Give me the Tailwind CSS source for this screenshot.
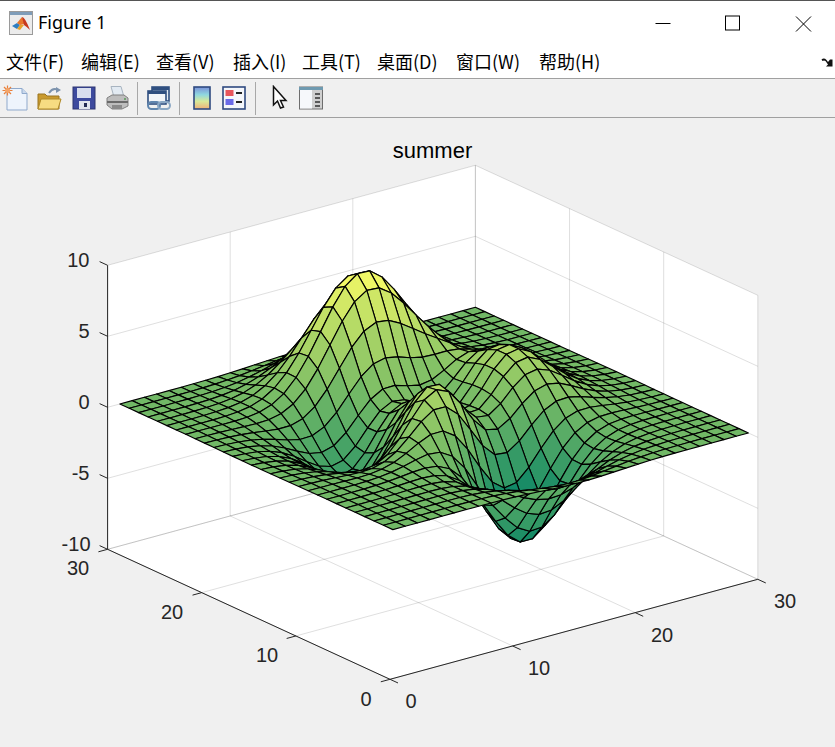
<!DOCTYPE html>
<html lang="zh">
<head>
<meta charset="utf-8">
<title>Figure 1</title>
<script src="https://cdn.jsdelivr.net/npm/@tailwindcss/browser@4"></script>
</head>
<body class="bg-[#f0f0f0] overflow-hidden">
<div class="w-[835px] h-[747px] flex flex-col bg-[#f0f0f0] font-['Noto_Sans','Noto_Sans_CJK_SC',sans-serif]">
  <!-- title bar -->
  <div class="h-[45px] bg-white border-t border-[#555] flex items-center shrink-0">
    <svg class="ml-[9px] w-[24px] h-[24px] shrink-0" viewBox="0 0 24 24">
      <rect x="0.5" y="0.5" width="23" height="23" fill="#ececec" stroke="#9a9a9a"/>
      <rect x="1" y="1" width="22" height="3" fill="#7f9db9"/>
      <path d="M3 15 L8 12 L11 14 L8 18Z" fill="#2f7fc1"/>
      <path d="M8 12 L13 6 L16 13 L11 14Z" fill="#e8762b"/>
      <path d="M13 6 Q16 6 21 19 Q18 16 15 14Z" fill="#c8391e"/>
      <path d="M8 18 L11 14 L15 14 L11 19Z" fill="#e8a22b"/>
    </svg>
    <span class="ml-[5px] mb-[2px] text-[18px] text-black leading-none">Figure 1</span>
    <div class="ml-auto flex items-center">
      <svg class="w-[16px] h-[16px] mr-[53px]" viewBox="0 0 16 16"><path d="M0.5 8.500H15.500" stroke="#000"/></svg>
      <svg class="w-[16px] h-[16px] mr-[55px]" viewBox="0 0 16 16"><rect x="1.5" y="1" width="14" height="14" fill="none" stroke="#000"/></svg>
      <svg class="w-[17px] h-[17px] mr-[23px]" viewBox="0 0 17 17"><path d="M1 1.500L16 16.500M16 1.500L1 16.500" stroke="#000" stroke-width="1"/></svg>
    </div>
  </div>
  <!-- menu bar -->
  <div class="h-[34px] pb-[2px] bg-white border-b border-[#a0a0a0] flex items-center text-[18px] text-black shrink-0 pl-[6px] relative font-['Noto_Sans_CJK_SC','Noto_Sans',sans-serif] leading-none">
    <span class="w-[75px]">文件(F)</span>
    <span class="w-[75px]">编辑(E)</span>
    <span class="w-[77px]">查看(V)</span>
    <span class="w-[69px]">插入(I)</span>
    <span class="w-[75px]">工具(T)</span>
    <span class="w-[79px]">桌面(D)</span>
    <span class="w-[83px]">窗口(W)</span>
    <span>帮助(H)</span>
    <svg class="absolute right-[2px] top-[12px] w-[12px] h-[10px]" viewBox="0 0 12 10"><path d="M0.5 2.500 Q3 0.500 5.500 3 L7 5 L9 2.500 L11.500 2.500 L11.500 9.500 L5 9.500 L7 7.500 L4.500 4 Q3 3 1.500 4Z" fill="#111"/></svg>
  </div>
  <!-- toolbar -->
  <div class="h-[39px] bg-[#f0f0f0] border-b border-[#a0a0a0] flex items-center shrink-0 pl-[2px]">
    <svg class="w-[26px] h-[26px]" viewBox="0 0 26 26"><path d="M5 3.500H20L25 8.500V25H5Z" fill="#eef4fc" stroke="#8fa9cc"/><path d="M20 3.500V8.500H25" fill="#c9d8ec" stroke="#8fa9cc"/><path d="M5.500 0.500V10.500M0.500 5.500H10.500M2 2L9 9M9 2L2 9" stroke="#e8803c" stroke-width="1.200"/><circle cx="5.500" cy="5.500" r="2.500" fill="#f4a468"/></svg>
    <svg class="ml-[8px] w-[26px] h-[26px]" viewBox="0 0 26 26"><path d="M2 9H9L11 11H23V24H2Z" fill="#c99a2e" stroke="#9a7420"/><path d="M2 24L5 14H25L22 24Z" fill="#f6dc82" stroke="#b08a28"/><path d="M13 8 Q17 2 22 5" fill="none" stroke="#7d93ad" stroke-width="2"/><path d="M20 2L25 5L20 8Z" fill="#7d93ad"/></svg>
    <svg class="ml-[9px] w-[26px] h-[26px]" viewBox="0 0 26 26"><rect x="2" y="2" width="22" height="22" fill="#3d4a9e" stroke="#2c3570"/><rect x="6" y="3" width="14" height="10" fill="#d8deee"/><rect x="8" y="16" width="11" height="8" fill="#dfe3ee"/><rect x="13" y="18" width="3" height="4" fill="#222a55"/></svg>
    <svg class="ml-[7px] w-[26px] h-[26px]" viewBox="0 0 26 26"><path d="M7 1.500H17L20 12H10Z" fill="#e2eaf2" stroke="#a8b4c0"/><path d="M3 13 L8 10 H20 L24 13 V21 L18 24 H8 L3 20Z" fill="#bdbdbd" stroke="#808080"/><path d="M3 17H24" stroke="#6a6a6a" stroke-width="2"/><path d="M8 20H18V24H8Z" fill="#8a8a8a"/><circle cx="21" cy="14" r="1" fill="#5a9a5a"/></svg>
    <div class="ml-[7px] w-px h-[33px] bg-[#a8a8a8]"></div>
    <svg class="ml-[8px] w-[26px] h-[26px]" viewBox="0 0 26 26"><rect x="6" y="2" width="17" height="14" fill="#e4ecf4" stroke="#2f4f80" stroke-width="1.600"/><rect x="6" y="2" width="17" height="3" fill="#2f4f80"/><rect x="2" y="6" width="18" height="13" fill="#f2f5f9" stroke="#2f4f80" stroke-width="1.600"/><rect x="2" y="6" width="18" height="3" fill="#2f4f80"/><rect x="2" y="17" width="12" height="7" rx="3.500" fill="none" stroke="#5f85ae" stroke-width="2"/><rect x="12" y="17" width="12" height="7" rx="3.500" fill="none" stroke="#8aa7c4" stroke-width="2"/></svg>
    <div class="ml-[7px] w-px h-[33px] bg-[#a8a8a8]"></div>
    <svg class="ml-[9px] w-[26px] h-[26px]" viewBox="0 0 26 26"><defs><linearGradient id="cb" x1="0" y1="0" x2="0" y2="1"><stop offset="0" stop-color="#7a8fd8"/><stop offset="0.350" stop-color="#8fd8e0"/><stop offset="0.650" stop-color="#d8ea9a"/><stop offset="1" stop-color="#f0b078"/></linearGradient></defs><rect x="5" y="2" width="16" height="22" fill="url(#cb)" stroke="#2f4a80" stroke-width="1.600"/></svg>
    <svg class="ml-[6px] w-[26px] h-[26px]" viewBox="0 0 26 26"><rect x="2" y="2" width="22" height="22" fill="#f4f6fa" stroke="#2f4a80" stroke-width="1.600"/><rect x="4.500" y="5" width="8" height="6" fill="#e8565c"/><rect x="4.500" y="14" width="8" height="6" fill="#6a6ae8"/><path d="M15 8H21M15 17H21" stroke="#222" stroke-width="2"/></svg>
    <div class="ml-[8px] w-px h-[33px] bg-[#a8a8a8]"></div>
    <svg class="ml-[11px] w-[26px] h-[26px]" viewBox="0 0 26 26"><path d="M6.500 1.500V20L10.500 16L13.500 23L16.500 22L13.500 15.500H19Z" fill="#fff" stroke="#111" stroke-width="1.500"/></svg>
    <svg class="ml-[5px] w-[26px] h-[26px]" viewBox="0 0 26 26"><rect x="1.500" y="2" width="23" height="22" fill="#cfcfcf" stroke="#6e6e6e"/><rect x="1" y="2" width="24" height="3" fill="#6f9ab0"/><rect x="2" y="5" width="12" height="18.500" fill="#f6f8fb"/><path d="M17 9H22M17 13H22M17 17H22M17 21H22" stroke="#333" stroke-width="1.600"/></svg>
  </div>
  <!-- figure canvas -->
  <div class="flex-1 bg-[#f0f0f0] min-h-0">
    <svg id="fig" class="block w-[835px] h-[629px]" viewBox="0 118 835 629" font-family="'Liberation Sans',Arial,sans-serif">
      <polygon points="107.600,265.300 475.400,165.300 757.800,295.300 757.800,579.300 390,679.300 107.600,549.300" fill="#fff"/>
      <g id="grid" fill="none" stroke="#262626" stroke-opacity="0.150" stroke-width="1"></g>
      <g id="surf" stroke="#000" stroke-width="1.150" stroke-linejoin="round"></g>
      <g id="axes" fill="none" stroke="#262626" stroke-width="1"></g>
      <g font-size="20" fill="#262626" text-anchor="end">
        <text x="89.500" y="267">10</text>
        <text x="89.500" y="337.500">5</text>
        <text x="89.500" y="408.500">0</text>
        <text x="89.500" y="479.500">-5</text>
        <text x="90.500" y="551">-10</text>
      </g>
      <g font-size="20" fill="#262626" text-anchor="middle">
        <text x="78" y="575">30</text>
        <text x="172" y="619">20</text>
        <text x="267" y="662">10</text>
        <text x="366" y="706">0</text>
        <text x="411" y="708">0</text>
        <text x="539" y="675">10</text>
        <text x="662" y="642">20</text>
        <text x="785" y="608">30</text>
      </g>
      <text x="432.500" y="158" font-size="22" fill="#000" text-anchor="middle">summer</text>
    </svg>
  </div>
</div>
<script>
(function () {
  var NS = 'http://www.w3.org/2000/svg';
  var O = [390, 679.3], EX = [367.8 / 30, -100 / 30], EY = [-282.4 / 30, -130 / 30], ZS = 284 / 20;
  function P(x, y, z) {
    return [O[0] + x * EX[0] + y * EY[0], O[1] + x * EX[1] + y * EY[1] - (z + 10) * ZS];
  }
  function line(g, a, b) {
    var l = document.createElementNS(NS, 'line');
    l.setAttribute('x1', a[0]); l.setAttribute('y1', a[1]);
    l.setAttribute('x2', b[0]); l.setAttribute('y2', b[1]);
    g.appendChild(l);
  }
  var grid = document.getElementById('grid');
  var k;
  for (k = -10; k <= 10; k += 5) {
    line(grid, P(0, 30, k), P(30, 30, k));
    line(grid, P(30, 30, k), P(30, 0, k));
  }
  for (k = 0; k <= 30; k += 10) {
    line(grid, P(k, 30, -10), P(k, 30, 10));
    line(grid, P(30, k, -10), P(30, k, 10));
    line(grid, P(k, 0, -10), P(k, 30, -10));
    line(grid, P(0, k, -10), P(30, k, -10));
  }
  var axes = document.getElementById('axes');
  line(axes, P(0, 30, -10), P(0, 30, 10));
  line(axes, P(0, 30, -10), P(0, 0, -10));
  line(axes, P(0, 0, -10), P(30, 0, -10));
  for (k = 0; k <= 30; k += 10) {
    line(axes, P(k, 0, -10), P(k, -0.85, -10));
    line(axes, P(0, k, -10), P(-0.75, k, -10));
  }
  for (k = -10; k <= 10; k += 5) line(axes, P(0, 30, k), P(0, 30.85, k));

  var N = 30, Z = [], min = Infinity, max = -Infinity;
  for (var r = 0; r < N; r++) {
    Z[r] = [];
    for (var c = 0; c < N; c++) {
      var x = -3 + 6 * c / (N - 1), y = -3 + 6 * r / (N - 1);
      var z = 3 * Math.pow(1 - x, 2) * Math.exp(-x * x - Math.pow(y + 1, 2))
        - 10 * (x / 5 - x * x * x - Math.pow(y, 5)) * Math.exp(-x * x - y * y)
        - Math.exp(-Math.pow(x + 1, 2) - y * y) / 3;
      Z[r][c] = z;
      if (z < min) min = z;
      if (z > max) max = z;
    }
  }
  var surf = document.getElementById('surf');
  function pt(r, c) { var p = P(c + 1, r + 1, Z[r][c]); return p[0].toFixed(2) + ',' + p[1].toFixed(2); }
  for (var j = N - 2; j >= 0; j--) {
    for (var i = N - 2; i >= 0; i--) {
      var t = (Z[j][i] - min) / (max - min);
      var poly = document.createElementNS(NS, 'polygon');
      poly.setAttribute('points', [pt(j, i), pt(j, i + 1), pt(j + 1, i + 1), pt(j + 1, i)].join(' '));
      poly.setAttribute('fill', 'rgb(' + Math.round(255 * t) + ',' + Math.round(255 * (0.5 + 0.5 * t)) + ',102)');
      surf.appendChild(poly);
    }
  }
})();
</script>
</body>
</html>
